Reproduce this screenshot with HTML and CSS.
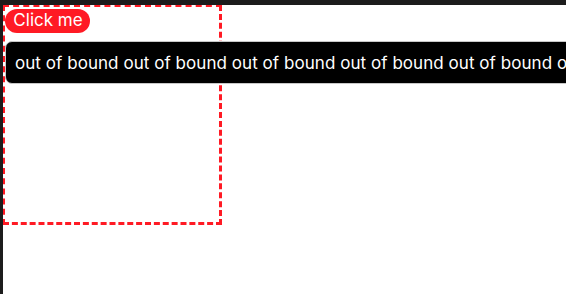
FILE: index.html
```html
<!DOCTYPE html>
<html>
<head>
<meta charset="utf-8">
<link rel="stylesheet" href="styles.css">
</head>
<body>
<div class="frame-top"></div>
<div class="frame-left"></div>
<div class="page">
  <div class="box">
    <button class="btn">Click me</button>
    <div class="bar">out of bound out of bound out of bound out of bound out of bound out of bound out of bound</div>
  </div>
</div>
</body>
</html>
```
FILE: styles.css
```css
html, body {
  margin: 0;
  padding: 0;
  background: #ffffff;
  overflow: hidden;
  width: 566px;
  height: 294px;
}
body {
  font-family: Inter, "Liberation Sans", Arial, sans-serif;
}
.frame-top {
  position: absolute;
  left: 0;
  top: 0;
  width: 566px;
  height: 5px;
  background: #1c1c1c;
  z-index: 2;
}
.frame-left {
  position: absolute;
  left: 0;
  top: 0;
  width: 3px;
  height: 294px;
  background: #1c1c1c;
  z-index: 2;
}
.page {
  padding: 5px 0 0 3px;
}
.box {
  box-sizing: border-box;
  width: 219px;
  height: 220px;
  border: 2px dashed #ff1a24;
  border-right-width: 3px;
  border-bottom-width: 3px;
  padding: 2px 0 0 0;
}
.btn {
  display: block;
  box-sizing: border-box;
  height: 24px;
  width: 85px;
  margin: 0;
  padding: 0 0 1px 1px;
  border: none;
  border-radius: 12px;
  background: #ff1a24;
  color: #ffffff;
  font-family: Inter, "Liberation Sans", Arial, sans-serif;
  font-size: 17px;
  line-height: 23px;
  text-align: center;
}
.bar {
  box-sizing: border-box;
  margin-top: 8px;
  height: 43px;
  width: max-content;
  white-space: nowrap;
  background: #000000;
  color: #ffffff;
  border: 1px solid #c8c8c8;
  border-radius: 7px;
  padding: 1px 9px 0 9px;
  font-size: 17px;
  letter-spacing: 0.05px;
  line-height: 41px;
}
```
